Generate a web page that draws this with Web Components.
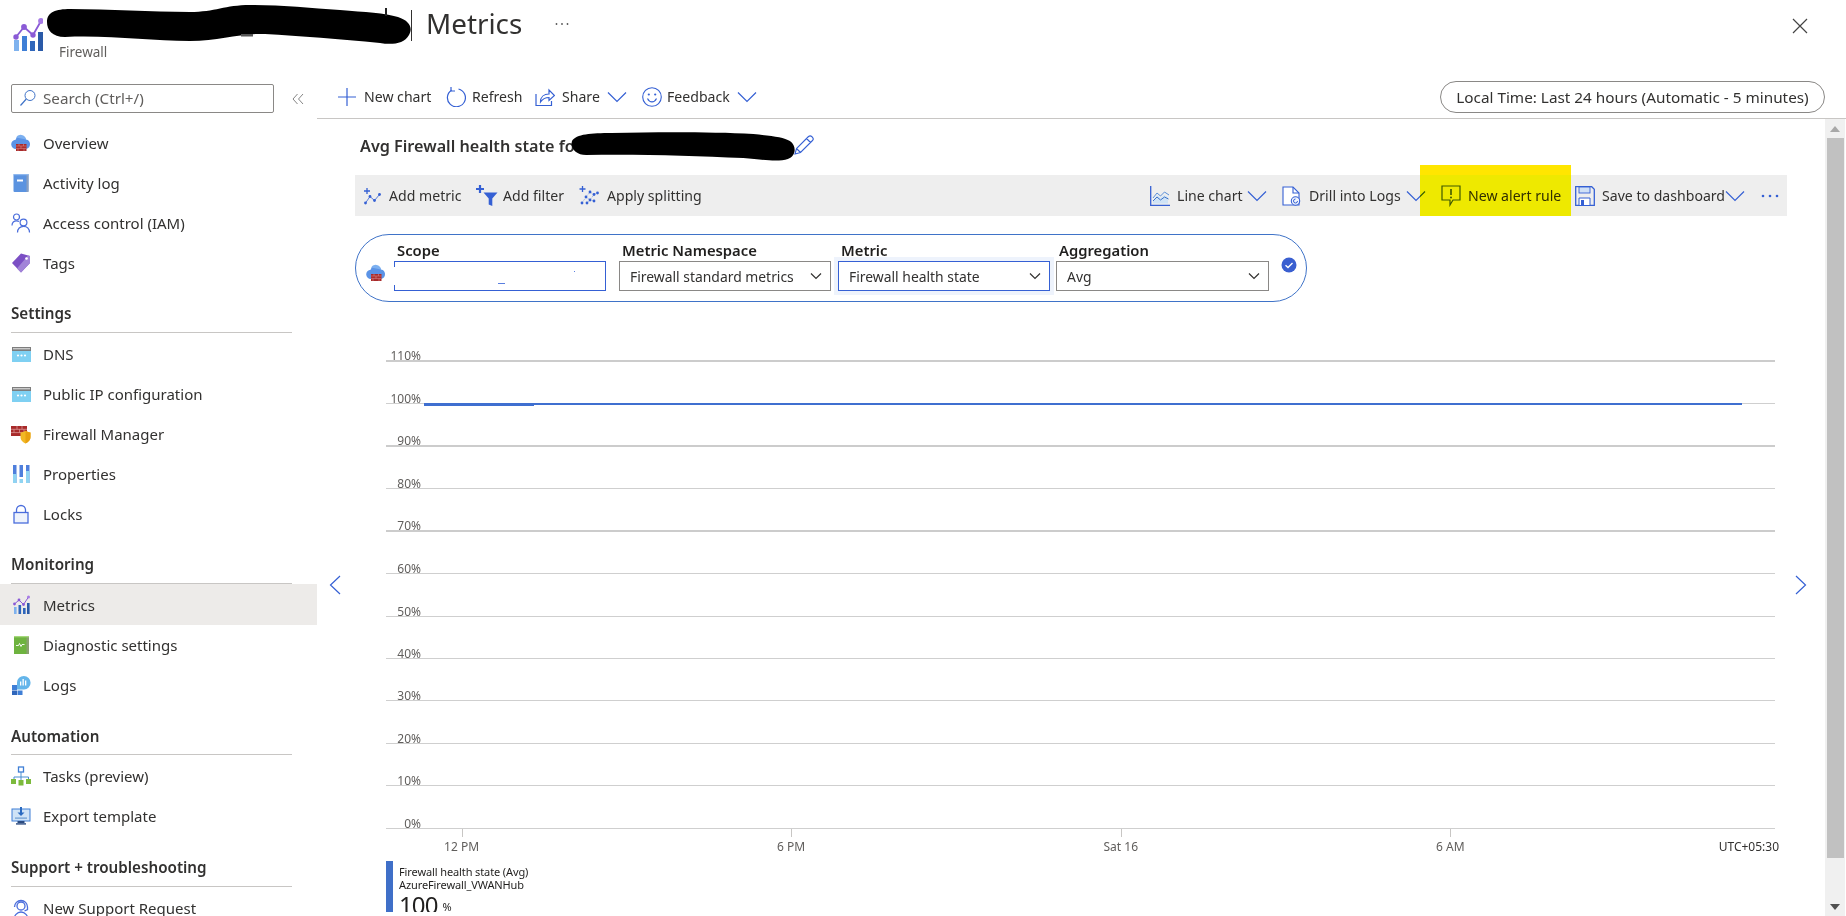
<!DOCTYPE html>
<html lang="en"><head><meta charset="utf-8"><title>Metrics</title>
<style>
html,body{margin:0;padding:0;background:#fff;height:916px;overflow:hidden;font-family:"Noto Sans","Open Sans",sans-serif;color:#323130}
</style></head><body>
<az-app></az-app>
<script>
const B='#3560d4';
const cloud=`<path d="M5 16a4.600 4.600 0 0 1-.4-9.200A5.400 5.400 0 0 1 15 6.400 4.900 4.900 0 0 1 15.200 16z" fill="#5b93e6"/><path d="M5 4.600A5.400 5.400 0 0 1 15 6.400" fill="#7cb0f0"/><rect x="5" y="11" width="10.500" height="7" fill="#a82a2a"/><path d="M5 13h10.500M5 15.400h10.500M8 11v2M12.500 11v2M10 13v2.400M7 15.400v2.600M13 15.400v2.600" stroke="#d98a8a" stroke-width=".6" fill="none"/>`;
const win=`<rect x="0" y="1" width="19" height="15" fill="#7fd0f2"/><rect x="0" y="1" width="19" height="4" fill="#7d7d7d"/><rect x="1" y="2" width="17" height="1.400" fill="#c9c9c9"/><circle cx="6" cy="9.500" r="1.100" fill="#fff"/><circle cx="9.500" cy="9.500" r="1.100" fill="#fff"/><circle cx="13" cy="9.500" r="1.100" fill="#fff"/>`;
const ICONS={
logo:[30,33,`<rect x="1" y="22" width="5" height="11" fill="#7fb2ee"/><rect x="9" y="18" width="5" height="15" fill="#3f7fd6"/><rect x="17" y="23" width="5" height="10" fill="#2f66bb"/><rect x="25" y="14" width="5" height="19" fill="#2a5aa8"/><path d="M3 19 11 9l9 8L28 3" fill="none" stroke="#8a5ad6" stroke-width="1.800"/><circle cx="3" cy="19" r="2.700" fill="#8a5ad6"/><circle cx="11" cy="9" r="2.900" fill="#8a5ad6"/><circle cx="20" cy="17" r="2.700" fill="#8a5ad6"/><circle cx="28" cy="3" r="2.900" fill="#a77be6"/>`],
cloud:[20,20,cloud],
book:[20,20,`<rect x="2.500" y="1" width="15" height="18" rx="1" fill="#5b93e0"/><rect x="15.500" y="1" width="2" height="18" fill="#8a9fc0"/><rect x="2.500" y="1" width="15" height="1.200" fill="#8fb8ee"/><rect x="6" y="6.500" width="6" height="2" fill="#fff"/>`],
people:[20,20,`<g fill="none" stroke="#4a6ddc" stroke-width="1.200"><circle cx="5.500" cy="4" r="3"/><path d="M1 12.500c0-3 2-4.700 4.500-4.700 1 0 1.800.2 2.500.7"/><circle cx="12.500" cy="9.500" r="3.400"/><path d="M6.500 19.500c0-3.700 2.500-6.200 6-6.200s6 2.500 6 6.200"/></g>`],
tag:[20,20,`<path d="M1 10 10 .5l9 2.500v7l-9 9.500z" fill="#7b4fc4"/><path d="M10 19.500l9-9.500V3l-2-.6L6 15.500z" fill="#a284d8"/><circle cx="15.500" cy="5.500" r="1.300" fill="#fff"/>`],
win:[19,17,win],
fwm:[20,20,`<rect x="0" y="2" width="16" height="10" fill="#a82a2a"/><path d="M0 5.300h16M0 8.600h16M6 2v3.300M11 2v3.300M3 5.300v3.300M8.500 5.300v3.300M13 5.300v3.300" stroke="#e0a0a0" stroke-width=".7"/><path d="M9.500 8.500c2.500 0 4-1 5-1.700 1 .7 3 1.700 5 1.700v4.500c0 3.500-2.500 5.300-5 6.500-2.500-1.200-5-3-5-6.500z" fill="#f2b824"/><path d="M14.500 6.800c1 .7 3 1.700 5 1.700v4.500c0 3.500-2.500 5.300-5 6.500z" fill="#e8a010"/>`],
props:[20,20,`<g><rect x="2" y="1" width="3.500" height="18" fill="#4f7fdc"/><rect x="2" y="10" width="3.500" height="9" fill="#8fd4f2"/><rect x="8.500" y="1" width="3.500" height="12" fill="#4f7fdc"/><rect x="8.500" y="15" width="3.500" height="4" fill="#8fd4f2"/><rect x="15" y="1" width="3.500" height="18" fill="#4f7fdc"/><rect x="15" y="7" width="3.500" height="12" fill="#8fd4f2"/></g>`],
lock:[20,20,`<g fill="none" stroke="#4a6ddc" stroke-width="1.300"><rect x="3" y="8.500" width="14" height="10.500" fill="#eef3fc"/><path d="M5.500 8.500V6a4.500 4.500 0 0 1 9 0v2.500"/></g>`],
metrics:[20,20,`<rect x="3" y="12" width="2.600" height="7" fill="#7fb2ee"/><rect x="7.500" y="10" width="2.600" height="9" fill="#2f66bb"/><rect x="12" y="13" width="2.600" height="6" fill="#2f66bb"/><rect x="16" y="8" width="2.600" height="11" fill="#2a5aa8"/><path d="M3.500 9 8 5l4.500 4.500L17.500 2" fill="none" stroke="#8a5ad6" stroke-width="1"/><circle cx="3.500" cy="9" r="1.400" fill="#8a5ad6"/><circle cx="8" cy="5" r="1.400" fill="#8a5ad6"/><circle cx="12.500" cy="9.500" r="1.400" fill="#8a5ad6"/><circle cx="17.500" cy="2" r="1.500" fill="#a77be6"/>`],
diag:[20,20,`<rect x="3" y="1" width="15" height="18" fill="#6eb33f"/><rect x="15.500" y="1" width="2.500" height="18" fill="#8aa070"/><rect x="3" y="1" width="15" height="1.300" fill="#a6d87c"/><path d="M5 10.500h2.500l1-2 1.500 3 1-2h2.500" fill="none" stroke="#fff" stroke-width=".9"/>`],
logs:[20,20,`<path d="M6 7.500a6.800 6.800 0 1 1 7 7H6z" fill="#64b5ea"/><rect x="9" y="6.500" width="1.300" height="4" fill="#fff"/><rect x="11.500" y="4" width="1.300" height="6.500" fill="#fff"/><rect x="14" y="5.500" width="1.300" height="5" fill="#fff"/><rect x="1" y="10" width="5" height="5" fill="#3f7fd6"/><rect x="1" y="15.500" width="5" height="4.500" fill="#2f66bb"/><rect x="6.500" y="15.500" width="5" height="4.500" fill="#3f7fd6"/>`],
tasks:[20,20,`<rect x="7.500" y="1" width="5" height="5" fill="#fff" stroke="#3f7fd6" stroke-width="1.300"/><path d="M10 6v5M3 14v-3h14.500v3M10 11v3" fill="none" stroke="#4a90d0"/><rect x="0" y="13" width="5" height="5" fill="#7cba3c"/><rect x="7.500" y="14" width="5" height="5.500" fill="#7cba3c"/><rect x="15" y="13" width="5" height="5" fill="#7cba3c"/>`],
export:[20,20,`<rect x="1" y="3" width="18" height="12" fill="#cfe3f6" stroke="#3f7fd6"/><rect x="6.500" y="15" width="7" height="2" fill="#2a4a80"/><rect x="5" y="17.200" width="10" height="1.400" fill="#2a4a80"/><path d="M10 1v8" stroke="#2a6ac0" stroke-width="2"/><path d="M6.500 6.500 10 10l3.500-3.500z" fill="#2a6ac0"/><rect x="4" y="11.500" width="12" height="1.200" fill="#6a9ad0"/>`],
support:[20,20,`<g fill="none" stroke="#4a6ddc" stroke-width="1.300"><circle cx="10" cy="8" r="4"/><path d="M3.500 9a6.500 6.500 0 0 1 13 0v2.500l-3 1.500"/><path d="M3 22c0-4.500 3-8 7-8s7 3.500 7 8"/></g>`],
search:[18,18,`<circle cx="11" cy="6.500" r="5" fill="none" stroke="#3f73c8" stroke-width="1"/><path d="M7.300 10 1.500 16.500" stroke="#3f73c8" stroke-width="1.200"/>`],
plus:[20,20,`<path d="M10 1v18M1 10h18" stroke="${B}" stroke-width="1.200"/>`],
refresh:[20,20,`<path d="M5.500 3.200a9 9 0 1 0 7-1.200" fill="none" stroke="${B}" stroke-width="1.200"/><path d="M5 0v4h4" fill="none" stroke="${B}" stroke-width="1.200"/>`],
share:[20,20,`<path d="M1 7v11.500h15.500V14" fill="none" stroke="${B}" stroke-width="1.200"/><path d="M5.500 15c0-5 3.500-8 8.500-8V3l5.500 5.500-5.500 5V10.500c-3.500 0-6.500 1.500-8.500 4.500z" fill="none" stroke="${B}" stroke-width="1.200"/>`],
smile:[20,20,`<g fill="none" stroke="${B}" stroke-width="1.100"><circle cx="10" cy="10" r="9.300"/><path d="M5.500 11.500c1.200 2.500 2.800 3.400 4.500 3.400s3.300-.9 4.500-3.400"/></g><circle cx="6.800" cy="7.500" r="1.100" fill="${B}"/><circle cx="13.200" cy="7.500" r="1.100" fill="${B}"/>`],
chev:[20,20,`<path d="M1 5.500 10 14.500 19 5.500" fill="none" stroke="${B}" stroke-width="1.200"/>`],
addm:[18,18,`<path d="M4 1v6M1 4h6" stroke="${B}" stroke-width="1.300"/><path d="M2.500 16 7 9.500l4.500 4 5-6" fill="none" stroke="${B}" stroke-width=".8"/><circle cx="2.500" cy="16" r="1.400" fill="${B}"/><circle cx="7" cy="9.500" r="1.400" fill="${B}"/><circle cx="11.500" cy="13.500" r="1.400" fill="${B}"/><circle cx="16.500" cy="7.500" r="1.400" fill="${B}"/>`],
filter:[22,22,`<path d="M4 0v8M0 4h8" stroke="${B}" stroke-width="2.200"/><path d="M7.500 7.500h14l-5.200 6V21l-3.600-1.500v-6z" fill="${B}"/>`],
split:[20,20,`<path d="M3.500 0v6M.5 3h6" stroke="${B}" stroke-width="1.300"/><g fill="${B}"><circle cx="3" cy="17" r="1.400"/><circle cx="8" cy="17" r="1.400"/><circle cx="7" cy="11" r="1.400"/><circle cx="11" cy="14" r="1.400"/><circle cx="15" cy="8.500" r="1.400"/><circle cx="11" cy="6" r="1.400"/><circle cx="15" cy="15" r="1.400"/><circle cx="18.500" cy="7" r="1.400"/></g><path d="M3 17 7 11l4 3 4-5.500 3.500-1.500M8 17l3-3 4 1M7 11l4-5 4 2.500" fill="none" stroke="${B}" stroke-width=".5" stroke-dasharray="1 1"/>`],
line:[20,20,`<path d="M.7 0v19.300H20" fill="none" stroke="${B}" stroke-width="1.300"/><path d="M3 15v2.500h15V11l-4-2-3.500 3L7 9z" fill="#cfe3f6"/><path d="M3 12 7 7l3.500 3 4-4 4.500 3" fill="none" stroke="#5a8fd8"/><path d="M3 15 7 11l3.500 3 4-3 4 2" fill="none" stroke="#3f73c8"/>`],
drill:[20,20,`<path d="M1 1h10l6 6v12H1z" fill="#fff" stroke="${B}" stroke-width="1.100"/><path d="M11 1v6h6" fill="none" stroke="${B}" stroke-width="1.100"/><circle cx="13.500" cy="15" r="4.200" fill="#f0f4fc" stroke="${B}" stroke-width="1.100"/><path d="M13.500 13a2 2 0 1 0 2 2" fill="none" stroke="${B}"/>`],
alert:[20,22,`<path d="M1 1h18v14h-7l-3 5v-5H1z" fill="none" stroke="#3e5a20" stroke-width="1.200"/><path d="M10 4v6" stroke="#3e5a20" stroke-width="1.600"/><circle cx="10" cy="12.500" r="1" fill="#3e5a20"/>`],
save:[20,20,`<path d="M.7.700h16l2.600 2.600v16H.7z" fill="none" stroke="${B}" stroke-width="1.300"/><rect x="4" y="1" width="11" height="6" fill="#cfe0f6" stroke="${B}" stroke-width=".9"/><path d="M4 19v-7h11v7" fill="#fff" stroke="${B}" stroke-width="1"/><rect x="6" y="14" width="3" height="5" fill="${B}"/>`],
dots:[20,20,`<circle cx="3" cy="10" r="1.300" fill="${B}"/><circle cx="10" cy="10" r="1.300" fill="${B}"/><circle cx="17" cy="10" r="1.300" fill="${B}"/>`],
pencil:[20,20,`<path d="M1 19l1.500-5.500L14.500 1.500c1-.8 2.300-.8 3.200 0l.8.8c.9 1 .9 2.300 0 3.200L6.500 17.500zM2.500 13.500l4 4M12.500 3.500l4 4" fill="none" stroke="${B}" stroke-width="1.100"/>`],
check:[16,16,`<circle cx="8" cy="8" r="7.500" fill="#3a5fd0"/><path d="M4.500 8.300 7 10.500l4.500-4.500" fill="none" stroke="#fff" stroke-width="1.400"/>`],
sel:[14,14,`<path d="M2 4.500 7 9.500 12 4.500" fill="none" stroke="#323130" stroke-width="1.200"/>`],
dclose:[16,16,`<path d="M1 1 15 15M15 1 1 15" stroke="#444" stroke-width="1.200"/>`],
cl:[12,20,`<path d="M11 1 1.500 10 11 19" fill="none" stroke="${B}" stroke-width="1.200"/>`],
cr:[12,20,`<path d="M1 1 10.500 10 1 19" fill="none" stroke="${B}" stroke-width="1.200"/>`],
dbl:[12,12,`<path d="M5.500 1 1 6l4.500 5M11 1 6.500 6l4.500 5" fill="none" stroke="#777" stroke-width=".9"/>`],
blobh:[370,42,`<path d="M0 19C0 9 9 6 23 6 63 6 103 9 143 9 168 9 178 2 203 2 233 2 263 5 293 7 318 9 338 10 351 14 363 18 366 25 362 32 357 41 345 42 333 40 293 36 253 33 218 31 193 30 173 38 143 38 103 38 63 32 18 34 5 34 0 27 0 19Z" fill="#000"/><rect x="194" y="31" width="12" height="2.500" fill="#555"/><rect x="338" y="5" width="2" height="8" fill="#222"/>`],
blobt:[225,30,`<g transform="scale(1.0135 1)"><path d="M1 9C5 2 20 1 40 1 90 0 140 0 180 2 198 4 210 5 216 9 223 14 222 24 214 27 205 30 190 28 170 26 120 24 70 22 15 23 5 23 -1 16 1 9Z" fill="#000"/></g>`],
scope:[212,28,`<rect x="0" y="5" width="2" height="18" fill="#fff"/><rect x="104" y="21" width="7" height="1" fill="#5a7fe0"/><rect x="180" y="9" width="1" height="1" fill="#5a7fe0"/>`]
};
function icon(n){const [w,h,s]=ICONS[n];return `<svg width="${w}" height="${h}" viewBox="0 0 ${w} ${h}" aria-hidden="true" style="display:block;flex:none;overflow:hidden">${s}</svg>`}
function def(name,css,render){customElements.define(name,class extends HTMLElement{connectedCallback(){if(this.shadowRoot)return;const r=this.attachShadow({mode:'open'});r.innerHTML=`<style>${css}</style>`+render(this)}})}
const attr=(e,a,d='')=>e.getAttribute(a)??d;

def('az-icon',':host{display:block;flex:none}',e=>icon(attr(e,'name')));

def('az-nav-item',`:host{display:flex;align-items:center;height:40px;padding-left:11px;font-size:15px;color:#323130;white-space:nowrap}
:host([active]){background:#edebe9;margin-top:-1px;padding-top:1px}
.i{width:20px;display:flex;justify-content:center;margin-right:12px}`,
e=>`<div class="i">${icon(attr(e,'icon'))}</div><slot></slot>`);

def('az-nav-section',`:host{display:block}
.h{box-sizing:border-box;height:var(--h,50px);margin:0 25px 0 11px;border-bottom:1px solid #c8c6c4;padding-top:var(--t,19px);font-size:15.200px;font-weight:600;color:#323130;line-height:22px;white-space:nowrap}
.g{margin-top:var(--g,1px)}`,
e=>`<div class="h">${attr(e,'title')}</div><div class="g"><slot></slot></div>`);

def('az-search',`:host{display:flex;align-items:center;gap:6px;box-sizing:border-box;width:263px;height:29px;border:1px solid #8a8886;border-radius:2px;padding:0 0 1px 7px;font-size:15.200px;color:#605e5c;background:#fff;white-space:nowrap}`,
e=>`${icon('search')}<slot></slot>`);

def('az-sidebar',`:host{display:block;width:317px;flex:none;height:838px;overflow:hidden}
.s{display:flex;align-items:center;padding:6px 0 0 11px;height:29px;margin-bottom:10px}
.c{margin-left:18px}`,
e=>`<div class="s"><az-search>Search (Ctrl+/)</az-search><div class="c">${icon('dbl')}</div></div><slot></slot>`);

def('az-header',`:host{display:flex;height:78px;position:relative;box-sizing:border-box;color:#323130}
.logo{margin:18px 4px 0 13px}
.t{display:flex;flex-direction:column}
.blob{margin-top:3px}
.sub{font-size:13.500px;color:#605e5c;margin:-1px 0 0 12px;line-height:16px}
.sep{width:1px;height:31px;background:#323130;margin:10px 14px 0 -6px}
.m{font-size:27.800px;line-height:36px;margin-top:5px;color:#323130}
.d{margin:14px 0 0 33px}
.x{margin:18px 38px 0 auto}`,
e=>`<div class="logo">${icon('logo')}</div><div class="t"><div class="blob">${icon('blobh')}</div><div class="sub">Firewall</div></div><div class="sep"></div><div class="m">Metrics</div><div class="d"><svg width="14" height="20" viewBox="0 0 14 20"><g fill="#555"><circle cx="1.500" cy="10" r=".9"/><circle cx="7" cy="10" r=".9"/><circle cx="12.500" cy="10" r=".9"/></g></svg></div><div class="x">${icon('dclose')}</div>`);

def('az-tool',`:host{display:flex;align-items:center;font-size:14.100px;color:#323130;white-space:nowrap;flex:none}
.l{display:block}`,
e=>{const g=attr(e,'g','7'),w=attr(e,'w'),c=e.hasAttribute('chev');return `${icon(attr(e,'icon'))}<span class="l" style="margin-left:${g}px;width:${w}px">${attr(e,'label')}</span>${c?`<span style="margin-left:${attr(e,'cg','8')}px">${icon('chev')}</span>`:''}`});

def('az-command-bar',`:host{display:flex;align-items:center;gap:15px;box-sizing:border-box;height:41px;padding:0 21px 3px 20px;border-bottom:1px solid #c8c6c4;flex:none}`,e=>`<slot></slot><slot name="end"></slot>`);

def('az-time-pill',`:host{display:flex;align-items:center;justify-content:center;box-sizing:border-box;width:385px;height:32px;border:1px solid #8a8886;border-radius:16px;font-size:15.300px;color:#323130;margin-left:auto;white-space:nowrap}`,e=>`<slot></slot>`);

def('az-title',`:host{display:flex;height:56px;align-items:flex-start;font-size:16.200px;font-weight:600;color:#323130;white-space:nowrap}
.t{margin:15px 0 0 5px;width:211px;line-height:24px}.b{margin-top:13px}.p{margin:16px 0 0 -2px}`,
e=>`<div class="t"><slot></slot></div><div class="b">${icon('blobt')}</div><div class="p">${icon('pencil')}</div>`);

def('az-chart-bar',`:host{display:flex;align-items:center;position:relative;height:41px;background:#eeeeee;padding:0 7px 0 8px;gap:15px}
.r{display:flex;align-items:center;gap:15px;margin-left:auto}
.y{position:absolute;left:1065px;top:-10px;width:151px;height:51px;background:linear-gradient(#ffe600 10px,#fffa00 10px);mix-blend-mode:multiply;pointer-events:none}`,
e=>`<slot></slot><div class="r"><slot name="end"></slot></div><div class="y"></div>`);

def('az-field',`:host{display:flex;flex-direction:column;width:var(--w,212px);flex:none}
label{font-size:14.800px;font-weight:600;line-height:23px;height:23px;color:#201f1e;white-space:nowrap;padding-left:var(--lp,3px);transform:translateY(1px)}
.b{box-sizing:border-box;height:30px;border:1px solid #8a8886;display:flex;align-items:center;padding:0 7px 0 10px;font-size:13.900px;color:#323130;justify-content:space-between;background:#fff;white-space:nowrap}
:host([focus]) .b{border:1px solid ${B};outline:4px solid #eef3fc}
:host([scope]) .b{border:1px solid ${B};padding:0}
:host([scope]) .b svg{margin-left:-1px}`,
e=>e.hasAttribute('scope')
?`<label>${attr(e,'label')}</label><div class="b">${icon('scope')}</div>`
:`<label>${attr(e,'label')}</label><div class="b"><span>${attr(e,'value')}</span>${icon('sel')}</div>`);

def('az-metric-pill',`:host{display:flex;box-sizing:border-box;height:68px;width:952px;margin-top:18px;border:1px solid #3f73c8;border-radius:34px;padding:3px 0 0 10px;align-items:flex-start}
.c{margin:25px 8px 0 0}.k{margin:19px 0 0 12px}`,
e=>`<div class="c">${icon('cloud')}</div><slot></slot><div class="k">${icon('check')}</div>`);

def('az-grid-row',`:host{display:flex;justify-content:flex-start;box-sizing:border-box;height:42.450px;border-bottom:1px solid #cfcfcf;font-size:12px;color:#605e5c}
:host([thick]){border-bottom:2px solid #cccccc}
span{width:35px;text-align:right;margin-top:auto;line-height:16px;margin-bottom:-2px;transform:translateY(1.500px)}`,
e=>`<span><slot></slot></span>`);

def('az-x-axis',`:host{display:flex;height:32px;padding-left:75.600px;position:relative;font-size:12px;color:#605e5c}
.u{position:absolute;right:-4px;top:9px;color:#323130;font-size:12px;white-space:nowrap}
.t{width:329.600px;flex:none;position:relative}
.t i{position:absolute;left:0;top:0;width:1px;height:8px;background:#c8c6c4}
.t b{position:absolute;left:-40px;width:80px;text-align:center;top:9px;font-weight:400;white-space:nowrap}`,
e=>['12 PM','6 PM','Sat 16','6 AM'].map(t=>`<div class="t"><i></i><b>${t}</b></div>`).join('')+`<div class="u">UTC+05:30</div>`);

def('az-legend',`:host{display:flex;height:51px;overflow:hidden;color:#201f1e;white-space:nowrap}
.bar{width:7px;background:#3f6fc8;flex:none;margin-right:6px}
.a{font-size:11px;line-height:13px;letter-spacing:-.11px;margin-top:4px}
.v{font-size:24px;line-height:26px;letter-spacing:-.9px;display:flex;align-items:flex-start;margin-top:1px}
.v small{font-size:11px;margin:7px 0 0 5px;line-height:16px;letter-spacing:0}`,
e=>`<div class="bar"></div><div><div class="a">Firewall health state (Avg)</div><div class="a" style="margin-top:0">AzureFirewall_VWANHub</div><div class="v">100<small>%</small></div></div>`);

def('az-chart',`:host{display:block;position:relative;margin:17.500px 12px 0 31px}
.line{position:absolute;left:38px;right:33px;top:83.500px;height:3px;background:linear-gradient(#3f6fd0,#3f6fd0) 0 0/110px 3px no-repeat,linear-gradient(#3f6fd0,#3f6fd0) 0 0/100% 2px no-repeat}`,
e=>`<slot></slot><div class="line"></div>`);

def('az-scrollbar',`:host{display:flex;flex-direction:column;align-items:center;width:20px;flex:none;background:#f0f0f0;height:797px;margin-right:1px}
.u,.d{height:19px;display:flex;align-items:center;justify-content:center;flex:none}
.t{width:17px;background:#c1c1c1;height:720px;flex:none}`,
e=>`<div class="u"><svg width="10" height="6" viewBox="0 0 10 6"><path d="M5 0 10 6H0z" fill="#a8a8a8"/></svg></div><div class="t"></div><div style="flex:1"></div><div class="d"><svg width="10" height="6" viewBox="0 0 10 6"><path d="M0 0H10L5 6z" fill="#505050"/></svg></div>`);

def('az-blade',`:host{display:flex;flex:1;min-width:0;position:relative;height:797px;overflow:hidden}
.c{flex:1;min-width:0;padding:0 38px;box-sizing:border-box;position:relative}
.al,.ar{position:absolute;top:456px}.al{left:12px}.ar{left:1478px}`,
e=>`<div class="c"><slot></slot><div class="al">${icon('cl')}</div><div class="ar">${icon('cr')}</div></div><az-scrollbar></az-scrollbar>`);

def('az-main',`:host{display:flex;flex-direction:column;flex:1;min-width:0;height:838px}`,e=>`<slot></slot>`);

def('az-app',`:host{display:block;width:1846px;height:916px;overflow:hidden;background:#fff}
.b{display:flex}`,
e=>`<az-header></az-header><div class="b">
<az-sidebar>
 <az-nav-item icon="cloud">Overview</az-nav-item>
 <az-nav-item icon="book">Activity log</az-nav-item>
 <az-nav-item icon="people">Access control (IAM)</az-nav-item>
 <az-nav-item icon="tag">Tags</az-nav-item>
 <az-nav-section title="Settings">
  <az-nav-item icon="win">DNS</az-nav-item>
  <az-nav-item icon="win">Public IP configuration</az-nav-item>
  <az-nav-item icon="fwm">Firewall Manager</az-nav-item>
  <az-nav-item icon="props">Properties</az-nav-item>
  <az-nav-item icon="lock">Locks</az-nav-item>
 </az-nav-section>
 <az-nav-section title="Monitoring">
  <az-nav-item icon="metrics" active>Metrics</az-nav-item>
  <az-nav-item icon="diag">Diagnostic settings</az-nav-item>
  <az-nav-item icon="logs">Logs</az-nav-item>
 </az-nav-section>
 <az-nav-section title="Automation" style="--t:20px">
  <az-nav-item icon="tasks">Tasks (preview)</az-nav-item>
  <az-nav-item icon="export">Export template</az-nav-item>
 </az-nav-section>
 <az-nav-section title="Support + troubleshooting" style="--t:20px;--h:51px">
  <az-nav-item icon="support">New Support Request</az-nav-item>
 </az-nav-section>
</az-sidebar>
<az-main>
 <az-command-bar>
  <az-tool icon="plus" label="New chart" w="67" g="7"></az-tool>
  <az-tool icon="refresh" label="Refresh" w="48" g="6"></az-tool>
  <az-tool icon="share" label="Share" w="37" g="7" chev></az-tool>
  <az-tool icon="smile" label="Feedback" w="62" g="5" chev></az-tool>
  <az-time-pill slot="end">Local Time: Last 24 hours (Automatic - 5 minutes)</az-time-pill>
 </az-command-bar>
 <az-blade>
  <az-title>Avg Firewall health state fo</az-title>
  <az-chart-bar>
   <az-tool icon="addm" label="Add metric" w="72" g="8"></az-tool>
   <az-tool icon="filter" label="Add filter" w="61" g="5"></az-tool>
   <az-tool icon="split" label="Apply splitting" w="94" g="8"></az-tool>
   <az-tool slot="end" icon="line" label="Line chart" w="64" cg="6" chev></az-tool>
   <az-tool slot="end" icon="drill" label="Drill into Logs" w="91" cg="6" chev></az-tool>
   <az-tool slot="end" icon="alert" label="New alert rule" w="92"></az-tool>
   <az-tool slot="end" icon="save" label="Save to dashboard" w="122" cg="1" chev></az-tool>
   <az-icon slot="end" name="dots"></az-icon>
  </az-chart-bar>
  <az-metric-pill>
   <az-field scope label="Scope"></az-field>
   <az-field label="Metric Namespace" value="Firewall standard metrics" style="margin-left:13px"></az-field>
   <az-field focus label="Metric" value="Firewall health state" style="margin-left:7px"></az-field>
   <az-field label="Aggregation" value="Avg" style="margin-left:6px;--w:213px"></az-field>
  </az-metric-pill>
  <az-chart>
   <az-grid-row thick>110%</az-grid-row><az-grid-row>100%</az-grid-row><az-grid-row thick>90%</az-grid-row><az-grid-row>80%</az-grid-row><az-grid-row thick>70%</az-grid-row><az-grid-row>60%</az-grid-row><az-grid-row>50%</az-grid-row><az-grid-row>40%</az-grid-row><az-grid-row>30%</az-grid-row><az-grid-row>20%</az-grid-row><az-grid-row>10%</az-grid-row><az-grid-row>0%</az-grid-row>
   <az-x-axis></az-x-axis>
   <az-legend></az-legend>
  </az-chart>
 </az-blade>
</az-main></div>`);
</script>
</body></html>
